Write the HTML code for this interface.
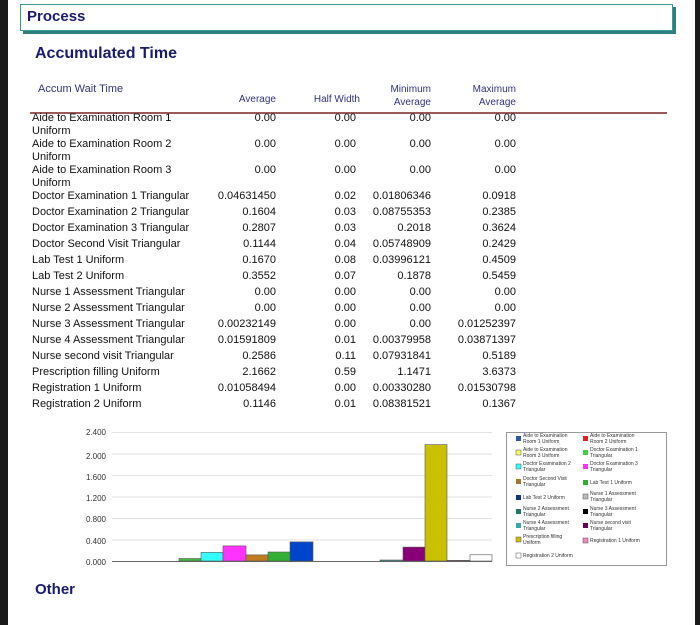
<!DOCTYPE html>
<html><head><meta charset="utf-8"><style>
body{margin:0;width:700px;height:625px;background:#fff;position:relative;overflow:hidden;font-family:"Liberation Sans",sans-serif}
.a{position:absolute}
.bl{left:0;top:0;width:8px;height:625px;background:#1a1a1a}
.br{left:695px;top:0;width:5px;height:625px;background:#1a1a1a}
.proc{left:20px;top:4px;width:645px;height:25px;border:1px solid #3a9a9a;box-shadow:3px 3px 0 #2f7f80;font-weight:bold;font-size:15px;color:#1a1a6e;line-height:24px;padding-left:6px;box-sizing:content-box}
h2{position:absolute;margin:0;font-size:16px;color:#1a1a6e;font-weight:bold}
.hd{color:#33337a;font-size:10px;line-height:13px;text-align:right}
.r{position:absolute;font-size:11px;color:#111;line-height:13px}
.n{left:32px;width:170px}
.c1,.c2,.c3,.c4{text-align:right}
.c1{left:180px;width:96px}.c2{left:280px;width:76px}.c3{left:360px;width:71px}.c4{left:440px;width:76px}
</style></head><body>
<div class="a bl"></div><div class="a br"></div>
<div class="a proc">Process</div>
<h2 style="left:35px;top:45px">Accumulated Time</h2>
<div class="a hd" style="left:38px;top:83px;text-align:left;font-size:11px">Accum Wait Time</div>
<div class="a hd" style="left:200px;top:93px;width:76px">Average</div>
<div class="a hd" style="left:280px;top:93px;width:80px">Half Width</div>
<div class="a hd" style="left:360px;top:83px;width:71px">Minimum<br>Average</div>
<div class="a hd" style="left:440px;top:83px;width:76px">Maximum<br>Average</div>
<div class="a" style="left:30px;top:112px;width:637px;height:2px;background:#9a5a5a"></div>
<div id="rows"></div>
<script>
var d=[["Aide to Examination Room 1<br>Uniform","0.00","0.00","0.00","0.00",112],
["Aide to Examination Room 2<br>Uniform","0.00","0.00","0.00","0.00",138],
["Aide to Examination Room 3<br>Uniform","0.00","0.00","0.00","0.00",164],
["Doctor Examination 1 Triangular","0.04631450","0.02","0.01806346","0.0918",190],
["Doctor Examination 2 Triangular","0.1604","0.03","0.08755353","0.2385"],
["Doctor Examination 3 Triangular","0.2807","0.03","0.2018","0.3624"],
["Doctor Second Visit Triangular","0.1144","0.04","0.05748909","0.2429"],
["Lab Test 1 Uniform","0.1670","0.08","0.03996121","0.4509"],
["Lab Test 2 Uniform","0.3552","0.07","0.1878","0.5459"],
["Nurse 1 Assessment Triangular","0.00","0.00","0.00","0.00"],
["Nurse 2 Assessment Triangular","0.00","0.00","0.00","0.00"],
["Nurse 3 Assessment Triangular","0.00232149","0.00","0.00","0.01252397"],
["Nurse 4 Assessment Triangular","0.01591809","0.01","0.00379958","0.03871397"],
["Nurse second visit Triangular","0.2586","0.11","0.07931841","0.5189"],
["Prescription filling Uniform","2.1662","0.59","1.1471","3.6373"],
["Registration 1 Uniform","0.01058494","0.00","0.00330280","0.01530798"],
["Registration 2 Uniform","0.1146","0.01","0.08381521","0.1367"]];
var h="",t=190;
d.forEach(function(r,i){var y=r[5]!==undefined?r[5]:(t+=16);
h+='<div class="r n" style="top:'+y+'px">'+r[0]+'</div>';
for(var k=1;k<5;k++)h+='<div class="r c'+k+'" style="top:'+y+'px">'+r[k]+'</div>';});
document.getElementById("rows").innerHTML=h;
</script>
<svg class="a" style="left:0;top:0" width="700" height="625" font-family="Liberation Sans,sans-serif">
<g stroke="#e2e2e2" stroke-width="1">
<line x1="112" y1="432.5" x2="492" y2="432.5"/><line x1="112" y1="454" x2="492" y2="454"/><line x1="112" y1="475.5" x2="492" y2="475.5"/><line x1="112" y1="497" x2="492" y2="497"/><line x1="112" y1="518.5" x2="492" y2="518.5"/><line x1="112" y1="540" x2="492" y2="540"/>
</g>
<line x1="112" y1="561.5" x2="492" y2="561.5" stroke="#666"/>
<g font-size="8" fill="#333" text-anchor="end">
<text x="106" y="435">2.400</text><text x="106" y="459">2.000</text><text x="106" y="480">1.600</text><text x="106" y="501">1.200</text><text x="106" y="522">0.800</text><text x="106" y="544">0.400</text><text x="106" y="565">0.000</text>
</g>
<g stroke="#555" stroke-width="0.6">
<rect x="179" y="558.5" width="22" height="2.5" fill="#44bb44"/>
<rect x="201" y="552.4" width="22" height="8.6" fill="#33ffff"/>
<rect x="223" y="545.9" width="23" height="15.1" fill="#ff33ff"/>
<rect x="246" y="554.9" width="22" height="6.1" fill="#c07a20"/>
<rect x="268" y="552" width="22" height="9" fill="#33b033"/>
<rect x="290" y="541.9" width="23" height="19.1" fill="#0044cc"/>
<rect x="380" y="560" width="23" height="1" fill="#33aaaa"/>
<rect x="403" y="547.1" width="22" height="13.9" fill="#880077"/>
<rect x="425" y="444.6" width="22" height="116.4" fill="#c8c000"/>
<rect x="447" y="560.3" width="23" height="0.7" fill="#dd77aa"/>
<rect x="470" y="554.8" width="22" height="6.2" fill="#fff"/>
</g>
<rect x="506.5" y="432.5" width="160" height="133" fill="#fff" stroke="#999"/>
<g font-size="5" fill="#333" stroke-width="0.5">
<rect x="516" y="436" width="5" height="5" fill="#3355aa"/><text x="523" y="437">Aide to Examination</text><text x="523" y="443">Room 1 Uniform</text>
<rect x="583" y="436" width="5" height="5" fill="#dd2222"/><text x="590" y="437">Aide to Examination</text><text x="590" y="443">Room 2 Uniform</text>
<rect x="516" y="450" width="5" height="5" fill="#ffff66" stroke="#555"/><text x="523" y="451">Aide to Examination</text><text x="523" y="457">Room 3 Uniform</text>
<rect x="583" y="450" width="5" height="5" fill="#44cc44"/><text x="590" y="451">Doctor Examination 1</text><text x="590" y="457">Triangular</text>
<rect x="516" y="464" width="5" height="5" fill="#33ffff" stroke="#555"/><text x="523" y="465">Doctor Examination 2</text><text x="523" y="471">Triangular</text>
<rect x="583" y="464" width="5" height="5" fill="#ff33ff"/><text x="590" y="465">Doctor Examination 3</text><text x="590" y="471">Triangular</text>
<rect x="516" y="479" width="5" height="5" fill="#a07a30"/><text x="523" y="480">Doctor Second Visit</text><text x="523" y="486">Triangular</text>
<rect x="583" y="480" width="5" height="5" fill="#33aa33"/><text x="590" y="484">Lab Test 1 Uniform</text>
<rect x="516" y="495" width="5" height="5" fill="#113388"/><text x="523" y="499">Lab Test 2 Uniform</text>
<rect x="583" y="494" width="5" height="5" fill="#bbb" stroke="#555"/><text x="590" y="495">Nurse 1 Assessment</text><text x="590" y="501">Triangular</text>
<rect x="516" y="509" width="5" height="5" fill="#227766"/><text x="523" y="510">Nurse 2 Assessment</text><text x="523" y="516">Triangular</text>
<rect x="583" y="509" width="5" height="5" fill="#000"/><text x="590" y="510">Nurse 3 Assessment</text><text x="590" y="516">Triangular</text>
<rect x="516" y="523" width="5" height="5" fill="#33aaaa"/><text x="523" y="524">Nurse 4 Assessment</text><text x="523" y="530">Triangular</text>
<rect x="583" y="523" width="5" height="5" fill="#660055"/><text x="590" y="524">Nurse second visit</text><text x="590" y="530">Triangular</text>
<rect x="516" y="537" width="5" height="5" fill="#c8c000" stroke="#555"/><text x="523" y="538">Prescription filling</text><text x="523" y="544">Uniform</text>
<rect x="583" y="538" width="5" height="5" fill="#ee88bb" stroke="#555"/><text x="590" y="542">Registration 1 Uniform</text>
<rect x="516" y="553" width="5" height="5" fill="#fff" stroke="#555"/><text x="523" y="557">Registration 2 Uniform</text>
</g>
</svg>
<h2 style="left:35px;top:581px;font-size:15px">Other</h2>
</body></html>
